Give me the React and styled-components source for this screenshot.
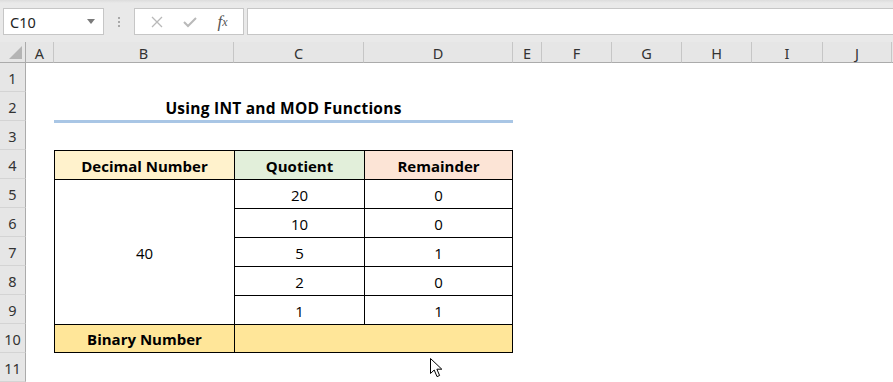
import styled, { createGlobalStyle } from "styled-components";

const GlobalStyle = createGlobalStyle`
  html, body {
    margin: 0;
    padding: 0;
    background: #ffffff;
    overflow: hidden;
  }
`;

const columns = [
  { label: "A", width: 28 },
  { label: "B", width: 180 },
  { label: "C", width: 130 },
  { label: "D", width: 149 },
  { label: "E", width: 29 },
  { label: "F", width: 70 },
  { label: "G", width: 70 },
  { label: "H", width: 70 },
  { label: "I", width: 71 },
  { label: "J", width: 69 },
];

const steps = [
  { q: 20, r: 0 },
  { q: 10, r: 0 },
  { q: 5, r: 1 },
  { q: 2, r: 0 },
  { q: 1, r: 1 },
];

export default function App() {
  return (
    <>
      <GlobalStyle />
      <Frame>
        <FormulaBar>
          <NameBox>
            <span>C10</span>
            <DropArrow />
          </NameBox>
          <Grip>
            <i />
            <i />
            <i />
          </Grip>
          <FxGroup>
            <FxButton>
              <svg width="12" height="12" viewBox="0 0 12 12">
                <path d="M1 1 L11 11 M11 1 L1 11" stroke="#b9b9b9" strokeWidth="1.3" fill="none" />
              </svg>
            </FxButton>
            <FxButton>
              <svg width="14" height="12" viewBox="0 0 14 12">
                <path d="M1 6 L5 10 L13 2" stroke="#b9b9b9" strokeWidth="2" fill="none" />
              </svg>
            </FxButton>
            <FxButton>
              f<sub>x</sub>
            </FxButton>
          </FxGroup>
          <FormulaInput />
        </FormulaBar>

        <Sheet>
          <Corner>
            <CornerTriangle />
          </Corner>
          {columns.map((c) => (
            <ColHead key={c.label}>{c.label}</ColHead>
          ))}
          <ColFill />

          {Array.from({ length: 11 }, (_, i) => (
            <RowHead key={i} style={{ gridRow: i + 2 }}>
              {i + 1}
            </RowHead>
          ))}

          <Title>Using INT and MOD Functions</Title>

          <Cell $col={3} $row={5} $bg="#fff2cc" $bold>
            Decimal Number
          </Cell>
          <Cell $col={4} $row={5} $bg="#e2efda" $bold>
            Quotient
          </Cell>
          <Cell $col={5} $row={5} $bg="#fce4d6" $bold $right>
            Remainder
          </Cell>

          <Cell $col={3} $row="6 / 11">
            40
          </Cell>
          {steps.map((s, i) => (
            <StepRow key={i} row={6 + i} q={s.q} r={s.r} />
          ))}

          <Cell $col={3} $row={11} $bg="#ffe699" $bold $bottom>
            Binary Number
          </Cell>
          <Cell $col="4 / 6" $row={11} $bg="#ffe699" $right $bottom />
        </Sheet>

        <Pointer width="13" height="20" viewBox="0 0 13 20">
          <path
            d="M0.5 0.5 L0.5 15.5 L4.2 12 L7 18.6 L9.6 17.5 L6.9 11.2 L11.8 11.2 Z"
            fill="#ffffff"
            stroke="#000000"
            strokeWidth="1"
            strokeLinejoin="round"
          />
        </Pointer>
      </Frame>
    </>
  );
}

function StepRow({ row, q, r }) {
  return (
    <>
      <Cell $col={4} $row={row}>
        {q}
      </Cell>
      <Cell $col={5} $row={row} $right>
        {r}
      </Cell>
    </>
  );
}

const Frame = styled.div`
  position: relative;
  width: 893px;
  height: 382px;
  display: flex;
  flex-direction: column;
  background: #ffffff;
  overflow: hidden;
`;

const FormulaBar = styled.div`
  height: 43px;
  box-sizing: border-box;
  display: flex;
  align-items: flex-start;
  padding: 8px 0 0 3px;
  background: linear-gradient(#dcdcdc 0px, #e9e9e9 3px, #e9e9e9 100%);
`;

const NameBox = styled.div`
  width: 101px;
  height: 27px;
  box-sizing: border-box;
  border: 1px solid #c6c6c6;
  background: #ffffff;
  display: flex;
  align-items: center;
  justify-content: space-between;
  padding: 0 8px 0 6px;
  font-family: "Noto Sans", "Open Sans", sans-serif;
  font-size: 14.5px;
  color: #222;
`;

const DropArrow = styled.span`
  width: 0;
  height: 0;
  border-left: 4.5px solid transparent;
  border-right: 4.5px solid transparent;
  border-top: 5px solid #7a7a7a;
`;

const Grip = styled.div`
  width: 30px;
  height: 27px;
  display: flex;
  flex-direction: column;
  align-items: center;
  justify-content: center;
  gap: 2px;

  i {
    width: 2px;
    height: 2px;
    background: #a8a8a8;
  }
`;

const FxGroup = styled.div`
  width: 110px;
  height: 27px;
  box-sizing: border-box;
  border: 1px solid #c6c6c6;
  background: #ffffff;
  display: flex;
  align-items: center;
  justify-content: space-around;
  padding: 0 4px 0 6px;
`;

const FxButton = styled.span`
  width: 30px;
  display: flex;
  align-items: center;
  justify-content: center;
  font-family: "Liberation Serif", serif;
  font-style: italic;
  font-size: 17px;
  color: #555555;
  line-height: 1;

  sub {
    font-size: 12px;
    vertical-align: -2px;
  }
`;

const FormulaInput = styled.div`
  flex: 1;
  height: 27px;
  margin-left: 3px;
  box-sizing: border-box;
  border: 1px solid #c6c6c6;
  border-right: none;
  background: #ffffff;
`;

const Sheet = styled.div`
  flex: 1;
  display: grid;
  grid-template-columns: 26px ${columns.map((c) => c.width + "px").join(" ")} 1fr;
  grid-template-rows: 21px repeat(11, 29px);
  font-family: "Open Sans", "Liberation Sans", sans-serif;
  font-size: 15px;
  color: #000;
`;

const Corner = styled.div`
  position: relative;
  background: #e6e6e6;
  box-sizing: border-box;
  border-right: 1px solid #ababab;
  border-bottom: 1px solid #ababab;
`;

const CornerTriangle = styled.span`
  position: absolute;
  right: 3px;
  bottom: 3px;
  width: 0;
  height: 0;
  border-left: 13px solid transparent;
  border-bottom: 13px solid #b4b4b4;
`;

const ColHead = styled.div`
  background: #e6e6e6;
  box-sizing: border-box;
  border-right: 1px solid #c6c6c6;
  border-bottom: 1px solid #ababab;
  display: flex;
  align-items: center;
  justify-content: center;
  font-family: "Noto Sans", "Open Sans", sans-serif;
  font-size: 14.5px;
  color: #333;
  padding-top: 1px;
`;

const ColFill = styled.div`
  background: #e6e6e6;
  border-bottom: 1px solid #ababab;
`;

const RowHead = styled.div`
  grid-column: 1;
  background: #e6e6e6;
  box-sizing: border-box;
  border-right: 1px solid #ababab;
  border-bottom: 1px solid #d4d4d4;
  display: flex;
  align-items: center;
  justify-content: center;
  font-family: "Noto Sans", "Open Sans", sans-serif;
  font-size: 14.5px;
  color: #333;
  padding-top: 2px;
`;

const Title = styled.div`
  grid-column: 3 / 6;
  grid-row: 3;
  box-sizing: border-box;
  margin-bottom: -2px;
  border-bottom: 3px solid #a9c6e5;
  display: flex;
  align-items: center;
  justify-content: center;
  font-weight: 700;
  font-size: 15.5px;
  letter-spacing: 0.25px;
  padding-top: 3px;
`;

const Cell = styled.div`
  grid-column: ${(p) => p.$col};
  grid-row: ${(p) => p.$row};
  box-sizing: border-box;
  background: ${(p) => p.$bg || "#ffffff"};
  font-weight: ${(p) => (p.$bold ? 700 : 400)};
  border-left: 1px solid #000;
  border-top: 1px solid #000;
  border-right: ${(p) => (p.$right ? "1px solid #000" : "none")};
  border-bottom: ${(p) => (p.$bottom ? "1px solid #000" : "none")};
  display: flex;
  align-items: center;
  justify-content: center;
  padding-top: 1px;
`;

const Pointer = styled.svg`
  position: absolute;
  left: 430px;
  top: 358px;
`;
